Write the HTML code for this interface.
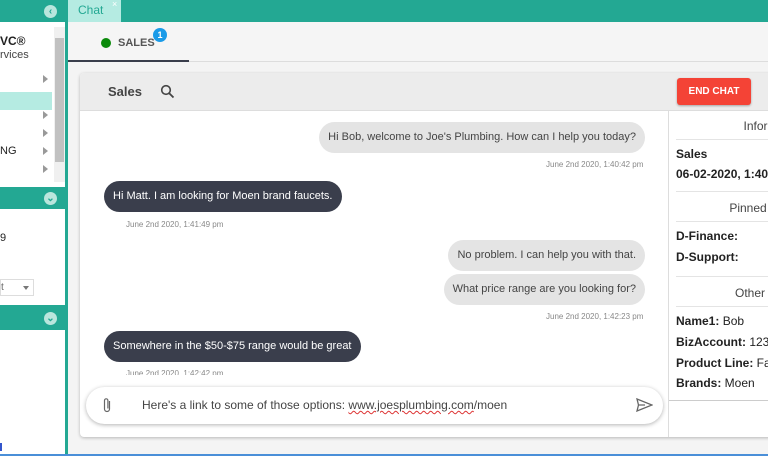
<!DOCTYPE html>
<html><head><meta charset="utf-8"><style>
*{box-sizing:border-box;margin:0;padding:0}
body{width:768px;height:456px;overflow:hidden;position:relative;font-family:"Liberation Sans",Arial,sans-serif;background:#f4f4f4;color:#333}
.abs{position:absolute}
.teal{background:#23a893}
.circ{position:absolute;width:13px;height:13px;border-radius:50%;background:#b9e6dd;color:#23a893;font-size:10px;line-height:13px;text-align:center;font-weight:bold}
.arr{position:absolute;left:43px;width:0;height:0;border-left:5px solid #999;border-top:4px solid transparent;border-bottom:4px solid transparent}
.bub{position:absolute;border-radius:17px;font-size:11px;line-height:31px;height:31px;padding:0 9px;white-space:nowrap}
.in{background:#e4e4e4;color:#444}
.out{background:#3a3e4c;color:#fff}
.ts{position:absolute;font-size:8px;color:#888;white-space:nowrap}
.info{position:absolute;left:676px;font-size:12px;color:#222;white-space:nowrap}
.sec{position:absolute;left:668px;width:100px;text-align:center;font-size:12px;color:#444;padding-left:20px;white-space:nowrap}
.hr{position:absolute;left:676px;width:92px;height:1px;background:#e4e4e4}
</style></head><body>
<div class="abs teal" style="left:0;top:0;width:68px;height:456px"></div>
<div class="circ" style="left:44px;top:5px">‹</div>
<div class="abs" style="left:0;top:22px;width:65px;height:165px;background:#fff"></div>
<div class="abs" style="left:54px;top:27px;width:11px;height:155px;background:#f0f0f0"></div>
<div class="abs" style="left:55px;top:38px;width:9px;height:124px;background:#c1c1c1"></div>
<div class="abs" style="left:0;top:34px;font-size:12px;font-weight:bold;color:#222">VC®</div>
<div class="abs" style="left:0;top:49px;font-size:11px;color:#444">rvices</div>
<div class="abs" style="left:0;top:92px;width:52px;height:18px;background:#b5ebe2"></div>
<div class="arr" style="top:75px"></div><div class="arr" style="top:111px"></div><div class="arr" style="top:129px"></div><div class="arr" style="top:147px"></div><div class="arr" style="top:165px"></div>
<div class="abs" style="left:0;top:145px;font-size:11px;color:#222">NG</div>
<div class="circ" style="left:44px;top:192px">⌄</div>
<div class="abs" style="left:0;top:209px;width:65px;height:96px;background:#fff"></div>
<div class="abs" style="left:0;top:232px;font-size:11px;color:#222">9</div>
<div class="abs" style="left:0;top:279px;width:34px;height:17px;border:1px solid #ddd;background:#fff;font-size:10px;color:#666;line-height:15px">t<span style="position:absolute;left:22px;top:6px;border-top:4px solid #777;border-left:3px solid transparent;border-right:3px solid transparent"></span></div>
<div class="circ" style="left:44px;top:312px">⌄</div>
<div class="abs" style="left:0;top:330px;width:65px;height:126px;background:#fff"></div>
<div class="abs" style="left:0;top:443px;width:2px;height:8px;background:#3355cc"></div>
<div class="abs teal" style="left:68px;top:0;width:700px;height:22px"></div>
<div class="abs" style="left:68px;top:0;width:53px;height:22px;background:#b5ebe2;color:#23a893;font-size:12px;padding:3px 10px">Chat<span style="position:absolute;left:44px;top:-1px;color:#fff;font-size:9px">×</span></div>
<div class="abs" style="left:68px;top:22px;width:700px;height:40px;background:#f5f5f5"></div>
<div class="abs" style="left:68px;top:60px;width:121px;height:2px;background:#3a3e4c"></div>
<div class="abs" style="left:189px;top:61px;width:579px;height:1px;background:#ddd"></div>
<div class="abs" style="left:101px;top:38px;width:10px;height:10px;border-radius:50%;background:#0a8a0a"></div>
<div class="abs" style="left:118px;top:37px;font-size:11px;font-weight:bold;color:#555">SALES</div>
<div class="abs" style="left:153px;top:28px;width:14px;height:14px;border-radius:50%;background:#1a9be8;color:#fff;font-size:9px;font-weight:bold;text-align:center;line-height:14px">1</div>
<div class="abs" style="left:80px;top:73px;width:700px;height:364px;background:#fff;border-radius:4px;box-shadow:0 1px 3px rgba(0,0,0,.25)"></div>
<div class="abs" style="left:80px;top:73px;width:700px;height:38px;background:#ececec;border-radius:4px 4px 0 0;border-bottom:1px solid #ddd"></div>
<div class="abs" style="left:108px;top:84px;font-size:13px;font-weight:bold;color:#444">Sales</div>
<svg class="abs" style="left:160px;top:84px" width="15" height="15" viewBox="0 0 15 15"><circle cx="6" cy="6" r="4.3" fill="none" stroke="#444" stroke-width="1.6"/><line x1="9.2" y1="9.2" x2="13.5" y2="13.5" stroke="#444" stroke-width="1.8"/></svg>
<div class="abs" style="left:677px;top:78px;width:74px;height:27px;background:#f44336;border-radius:3px;color:#fff;font-size:10px;font-weight:bold;text-align:center;line-height:27px;box-shadow:0 1px 2px rgba(0,0,0,.3)">END CHAT</div>
<div class="abs" style="left:668px;top:111px;width:1px;height:326px;background:#ddd"></div>
<div class="bub in" style="right:123px;top:122px">Hi Bob, welcome to Joe's Plumbing. How can I help you today?</div>
<div class="ts" style="left:546px;top:160px">June 2nd 2020, 1:40:42 pm</div>
<div class="bub out" style="left:104px;top:181px">Hi Matt. I am looking for Moen brand faucets.</div>
<div class="ts" style="left:126px;top:220px">June 2nd 2020, 1:41:49 pm</div>
<div class="bub in" style="right:123px;top:240px">No problem. I can help you with that.</div>
<div class="bub in" style="right:123px;top:274px">What price range are you looking for?</div>
<div class="ts" style="left:546px;top:312px">June 2nd 2020, 1:42:23 pm</div>
<div class="bub out" style="left:104px;top:331px">Somewhere in the $50-$75 range would be great</div>
<div class="ts" style="left:126px;top:369px;height:6px;overflow:hidden">June 2nd 2020, 1:42:42 pm</div>
<div class="abs" style="left:86px;top:387px;width:577px;height:37px;background:#fff;border-radius:19px;box-shadow:0 1px 4px rgba(0,0,0,.3)"></div>
<svg class="abs" style="left:102px;top:397px" width="10" height="17" viewBox="0 0 10 17"><path d="M7.5 4v8a2.5 2.5 0 0 1-5 0V3.5a1.7 1.7 0 0 1 3.4 0V11.5" fill="none" stroke="#666" stroke-width="1.2"/></svg>
<div class="abs" style="left:142px;top:398px;font-size:12px;color:#444;white-space:nowrap">Here's a link to some of those options: <span style="text-decoration:underline wavy #d33;text-decoration-thickness:1px">www.joesplumbing.com</span>/moen</div>
<svg class="abs" style="left:636px;top:398px" width="17" height="14" viewBox="0 0 17 14"><path d="M1 1L16 7L1 13L2.5 7Z M2.5 7H9" fill="none" stroke="#666" stroke-width="1.3"/></svg>
<div class="sec" style="top:119px;padding-left:75px">Infor</div>
<div class="hr" style="top:139px"></div>
<div class="info" style="top:147px;font-weight:bold">Sales</div>
<div class="info" style="top:167px;font-weight:bold">06-02-2020, 1:40</div>
<div class="hr" style="top:191px"></div>
<div class="sec" style="top:201px;padding-left:60px">Pinned</div>
<div class="hr" style="top:221px"></div>
<div class="info" style="top:229px;font-weight:bold">D-Finance:</div>
<div class="info" style="top:250px;font-weight:bold">D-Support:</div>
<div class="hr" style="top:276px"></div>
<div class="sec" style="top:286px;padding-left:67px">Other .</div>
<div class="hr" style="top:306px"></div>
<div class="info" style="top:314px"><b>Name1:</b> Bob</div>
<div class="info" style="top:335px"><b>BizAccount:</b> 1234</div>
<div class="info" style="top:356px"><b>Product Line:</b> Fau</div>
<div class="info" style="top:376px"><b>Brands:</b> Moen</div>
<div class="abs" style="left:669px;top:400px;width:99px;height:1px;background:#ccc"></div>
<div class="abs" style="left:0;top:454px;width:768px;height:2px;background:#4a8fd8"></div>
</body></html>
